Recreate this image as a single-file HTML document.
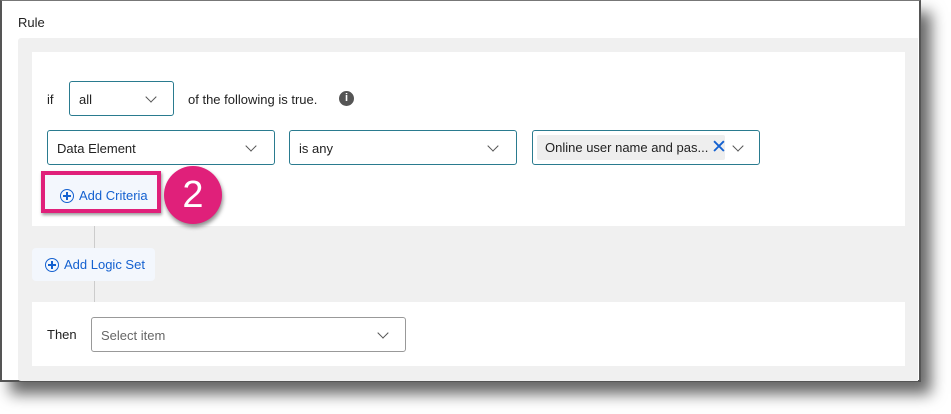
<!DOCTYPE html><html><head><style>
body{margin:0;width:951px;height:414px;background:#fff;font-family:"Liberation Sans",sans-serif;position:relative;overflow:hidden}
.a{position:absolute}
.frame{left:0;top:0;width:917px;height:379px;border:2px solid #555;border-top:1px solid #777;background:#fff;box-shadow:10px 12px 14px rgba(0,0,0,.6)}
.sel{position:absolute;border:1px solid #2a7b8f;border-radius:3px;background:#fff;box-sizing:border-box;font-size:13px;color:#222}
.chev{position:absolute;width:7px;height:7px;border-right:1.5px solid #555;border-bottom:1.5px solid #555;transform:rotate(45deg)}
.t{position:absolute;font-size:13px;color:#222;white-space:nowrap}
.blue{color:#1461d0}
.pc{display:inline-block;width:12px;height:12px;border:1.5px solid #1461d0;border-radius:50%;position:relative;vertical-align:-3px;margin-right:5px}
.pc:before{content:"";position:absolute;left:2px;top:5.3px;width:8px;height:1.5px;background:#1461d0}
.pc:after{content:"";position:absolute;left:5.3px;top:2px;width:1.5px;height:8px;background:#1461d0}
</style></head><body>
<div class="a frame"></div>
<div class="t" style="left:18px;top:15px">Rule</div>
<div class="a" style="left:18px;top:38px;width:900px;height:343px;background:#f0f0f0;border-radius:3px 0 0 3px"></div>
<div class="a" style="left:32px;top:52px;width:873px;height:174px;background:#fff"></div>
<div class="a" style="left:94px;top:226px;width:1px;height:76px;background:#ccc"></div>
<div class="a" style="left:32px;top:302px;width:873px;height:64px;background:#fff"></div>
<div class="t" style="left:47px;top:92px">if</div>
<div class="sel" style="left:69px;top:81px;width:105px;height:35px"><span class="t" style="left:9px;top:10px">all</span><div class="chev" style="left:77px;top:11px"></div></div>
<div class="t" style="left:188px;top:92px">of the following is true.</div>
<div class="a" style="left:339px;top:91px;width:15px;height:15px;border-radius:50%;background:#555;color:#fff;font-size:11px;font-weight:bold;text-align:center;line-height:15px">i</div>
<div class="sel" style="left:47px;top:130px;width:228px;height:35px"><span class="t" style="left:9px;top:10px">Data Element</span><div class="chev" style="left:199px;top:11px"></div></div>
<div class="sel" style="left:289px;top:130px;width:228px;height:35px"><span class="t" style="left:9px;top:10px">is any</span><div class="chev" style="left:199px;top:11px"></div></div>
<div class="sel" style="left:532px;top:130px;width:228px;height:35px"><div class="a" style="left:4px;top:4px;width:188px;height:25px;background:#eee;border-radius:2px"></div><span class="t" style="left:12px;top:9px">Online user name and pas...</span><span class="t blue" style="left:178px;top:5px;font-size:19px">✕</span><div class="chev" style="left:201px;top:11px"></div></div>
<div class="a" style="left:41px;top:171px;width:112px;height:34px;border:4px solid #e0207a;background:#f3f7fd;box-shadow:1px 2px 3px rgba(0,0,0,.4)"></div>
<div class="t blue" style="left:60px;top:188px"><span class="pc"></span>Add Criteria</div>
<div class="a" style="left:164px;top:166px;width:58px;height:58px;border-radius:50%;background:#e0207a;box-shadow:1px 3px 4px rgba(0,0,0,.45);color:#fff;font-size:38px;text-align:center;line-height:58px">2</div>
<div class="a" style="left:32px;top:248px;width:123px;height:33px;background:#f3f7fd;border-radius:4px"></div>
<div class="t blue" style="left:45px;top:257px"><span class="pc"></span>Add Logic Set</div>
<div class="t" style="left:47px;top:327px">Then</div>
<div class="sel" style="left:91px;top:317px;width:315px;height:35px;border-color:#999"><span class="t" style="left:9px;top:10px;color:#666">Select item</span><div class="chev" style="left:287px;top:11px"></div></div>
</body></html>
